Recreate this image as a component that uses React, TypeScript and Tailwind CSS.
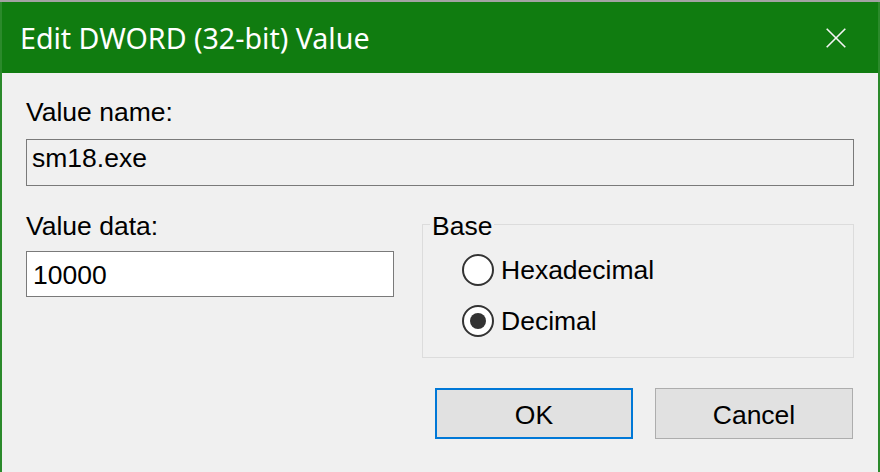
import React, { useState } from 'react'

const SANS = { fontFamily: '"Liberation Sans", Arial, sans-serif' }

function Radio({ checked, label, onClick }: { checked: boolean; label: string; onClick: () => void }) {
  return (
    <button type="button" onClick={onClick} className="flex h-[32px] items-center gap-[7px] text-left">
      <span className="flex h-[32px] w-[32px] shrink-0 items-center justify-center rounded-full border-2 border-[#333333] bg-white">
        {checked && <span className="block h-[16px] w-[16px] rounded-full bg-[#333333]" />}
      </span>
      <span className="text-[26.5px] leading-[30px] text-black">{label}</span>
    </button>
  )
}

export default function App() {
  const [base, setBase] = useState<'hex' | 'dec'>('dec')
  const [data, setData] = useState('10000')

  return (
    <div className="flex h-[472px] w-[880px] flex-col overflow-hidden bg-[#f0f0f0]" style={SANS}>
      <div className="h-[2px] shrink-0 bg-[#a3a3a3]" />

      <div className="flex flex-1 flex-col border-x-2 border-[#2b8a2b]">
        {/* title bar */}
        <div className="flex h-[71px] shrink-0 items-center justify-between bg-[#107c10] pl-[18px]">
          <span className="text-[28.6px] leading-[34px] text-white" style={{ fontFamily: '"Noto Sans", "Open Sans", sans-serif' }}>
            Edit DWORD (32-bit) Value
          </span>
          <svg width="20" height="20" viewBox="0 0 20 20" className="mr-[32px]">
            <path d="M0.7 0.7 L19.3 19.3 M19.3 0.7 L0.7 19.3" stroke="#f4f4f4" strokeWidth="1.6" fill="none" />
          </svg>
        </div>

        {/* body */}
        <div className="flex flex-col px-[24px]">
          <label className="mt-[24px] text-[26.5px] leading-[30px] text-black">Value name:</label>
          <div className="mt-[12px] flex h-[47px] items-start border border-[#7a7a7a] bg-[#f0f0f0] pl-[5px] pt-[3px] text-[26.5px] leading-[30px] text-black">
            sm18.exe
          </div>

          <div className="mt-[25px] flex items-start">
            <div className="flex w-[368px] flex-col">
              <label className="text-[26.5px] leading-[30px] text-black">Value data:</label>
              <input
                value={data}
                onChange={e => setData(e.target.value)}
                className="mt-[10px] h-[46px] border border-[#7a7a7a] bg-white pl-[6px] pt-[3px] text-[26.5px] leading-[30px] text-black outline-none"
                style={SANS}
              />
            </div>

            <div className="relative ml-[28px] mt-[13px] h-[134px] w-[432px] border border-[#dcdcdc] pl-[39px] pt-[29px]">
              <span className="absolute left-[7px] top-[-14px] bg-[#f0f0f0] px-[2px] text-[26.5px] leading-[30px] text-black">Base</span>
              <div className="flex flex-col gap-[19px]">
                <Radio checked={base === 'hex'} label="Hexadecimal" onClick={() => setBase('hex')} />
                <Radio checked={base === 'dec'} label="Decimal" onClick={() => setBase('dec')} />
              </div>
            </div>
          </div>

          <div className="mt-[30px] flex justify-end gap-[22px] pr-[1px]">
            <button className="h-[51px] w-[198px] border-2 border-[#0078d7] bg-[#e1e1e1] pt-[2px] text-[26.5px] leading-[30px] text-black">
              OK
            </button>
            <button className="h-[51px] w-[198px] border border-[#adadad] bg-[#e1e1e1] pt-[2px] text-[26.5px] leading-[30px] text-black">
              Cancel
            </button>
          </div>
        </div>
      </div>
    </div>
  )
}
